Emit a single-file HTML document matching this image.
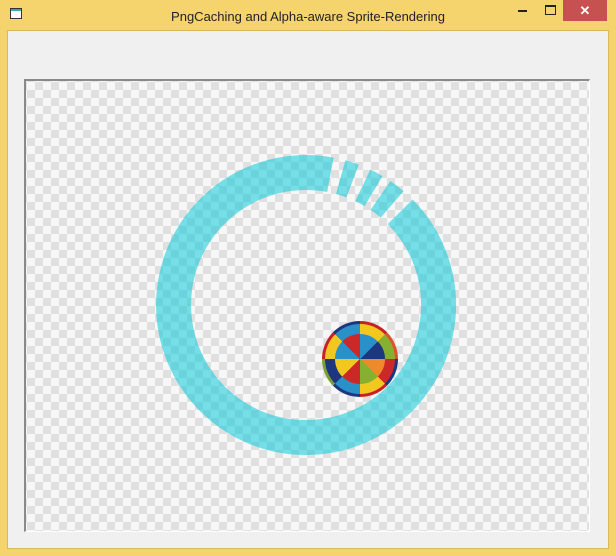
<!DOCTYPE html>
<html><head><style>
html,body{margin:0;padding:0;width:616px;height:556px;overflow:hidden;background:#f5d36d}
.title{position:absolute;left:0;top:0;width:616px;height:31px;font:13px "Liberation Sans",sans-serif;color:#222;text-align:center;line-height:33px}
.client{position:absolute;left:8px;top:31px;width:600px;height:517px;background:#f0f0f0;box-shadow:0 0 0 1px #d9b95a}
.canvas{position:absolute;left:24px;top:79px;width:563px;height:450px;border-top:2px solid #8a8a8a;border-left:2px solid #8a8a8a;border-right:1px solid #fff;border-bottom:1px solid #fff;
background-color:#f7f7f7;background-image:conic-gradient(#e0e0e0 25%,transparent 0 50%,#e0e0e0 0 75%,transparent 0);background-size:16px 16px;background-position:1px 1px;overflow:hidden}
.close{position:absolute;left:563px;top:0;width:44px;height:21px;background:#c75050;color:#fff;font:bold 13px "Liberation Sans",sans-serif;text-align:center;line-height:21px}
.ball{position:absolute;border-radius:50%}
</style></head><body>
<div class="title">PngCaching and Alpha-aware Sprite-Rendering</div>
<div style="position:absolute;left:10px;top:8px;width:10px;height:9px;border:1px solid #333;background:#fff;box-shadow:inset 0 2px 0 #3aa"></div>
<div style="position:absolute;left:518px;top:10px;width:9px;height:2px;background:#222"></div>
<div style="position:absolute;left:545px;top:5px;width:9px;height:7px;border:1px solid #222;border-top-width:2px"></div>
<div class="close">✕</div>
<div class="client"></div>
<div class="canvas">
<svg width="563" height="450" style="position:absolute;left:0;top:0" viewBox="26 81 563 450">
<g fill="none" stroke="rgb(0,200,215)" stroke-opacity="0.52" stroke-width="35">
<path d="M400.2 211.8 A132.5 132.5 0 1 1 330.4 174.8"/>
<path d="M340.7 177.1 A132.5 132.5 0 0 1 352.6 181.0"/>
<path d="M362.8 185.3 A132.5 132.5 0 0 1 373.6 191.1"/>
<path d="M380.5 195.4 A132.5 132.5 0 0 1 392.2 204.4"/>
</g>
</svg>
</div>
<div class="ball" style="left:322px;top:321px;width:76px;height:76px;background:conic-gradient(#c82028 0 45deg,#e0502a 45deg 90deg,#1e3580 90deg 135deg,#c82028 135deg 180deg,#1e3580 180deg 225deg,#7aa030 225deg 270deg,#c82028 270deg 315deg,#1e3580 315deg)"></div>
<div class="ball" style="left:325px;top:324px;width:70px;height:70px;background:conic-gradient(#f2c81e 0 45deg,#86b030 45deg 90deg,#cc2828 90deg 135deg,#f2c81e 135deg 180deg,#2a90c8 180deg 225deg,#1e3580 225deg 270deg,#f2c81e 270deg 315deg,#2a90c8 315deg)"></div>
<div class="ball" style="left:335px;top:334px;width:50px;height:50px;background:conic-gradient(#2a90c8 0 45deg,#1e3580 45deg 90deg,#ef8a2a 90deg 135deg,#86b030 135deg 180deg,#cc2828 180deg 225deg,#f2c81e 225deg 270deg,#2a90c8 270deg 315deg,#cc2828 315deg)"></div>
</body></html>
